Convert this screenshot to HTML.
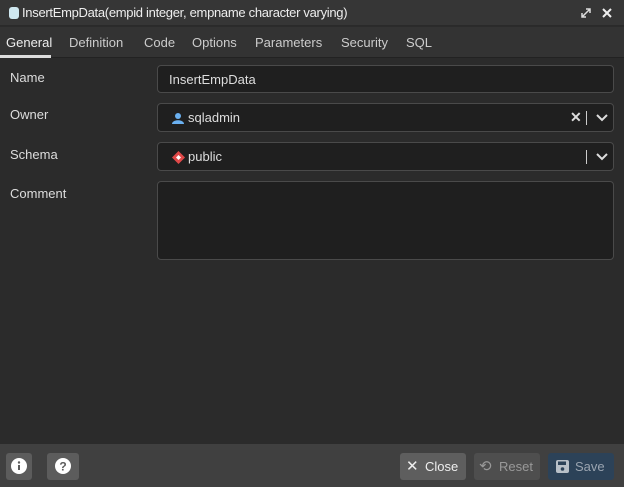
<!DOCTYPE html>
<html><head><style>
*{box-sizing:border-box;margin:0;padding:0}
body{width:624px;height:487px;background:#2b2b2b;font-family:"Liberation Sans",sans-serif;color:#e0e0e0;position:relative;overflow:hidden;font-size:13px}
.title{position:absolute;left:0;top:0;width:624px;height:26px;background:#363636;border-bottom:1px solid #2a2a2a}
.title span{position:absolute;left:22px;top:5px;font-size:13px;color:#eee;letter-spacing:-0.3px}
.tabs{position:absolute;top:27px;left:0;width:624px;height:31px;background:#333;border-bottom:1px solid #222}
.tab{position:absolute;top:8px;font-size:13px;color:#ccc}
.ul{position:absolute;left:0;top:28px;width:51px;height:3px;background:#ddd}
.lbl{position:absolute;left:10px;font-size:13px;color:#ddd}
.inp{position:absolute;left:157px;width:457px;background:#1f1f1f;border:1px solid #4a4a4a;border-radius:4px}
.inp span{position:absolute;top:6px;font-size:13px;color:#ddd}
.footer{position:absolute;left:0;top:444px;width:624px;height:43px;background:#404040}
.btn{position:absolute;top:9px;height:27px;border-radius:3px;background:#5a5a5a;color:#eee;font-size:13px}
</style></head><body>
<div class="title">
<div style="position:absolute;left:9px;top:7px;width:10px;height:12px;background:#cfe8f0;border-radius:3px"></div>
<span>InsertEmpData(empid integer, empname character varying)</span>
<svg style="position:absolute;left:580px;top:7px" width="12" height="12" viewBox="0 0 12 12"><path d="M2 10L10 2M6 2h4v4M2 6v4h4" stroke="#ddd" stroke-width="1.5" fill="none"/></svg>
<svg style="position:absolute;left:602px;top:8px" width="10" height="10" viewBox="0 0 10 10"><path d="M1 1L9 9M9 1L1 9" stroke="#eee" stroke-width="2"/></svg>
</div>
<div class="tabs">
<span class="tab" style="left:6px;color:#eee">General</span>
<span class="tab" style="left:69px">Definition</span>
<span class="tab" style="left:144px">Code</span>
<span class="tab" style="left:192px">Options</span>
<span class="tab" style="left:255px">Parameters</span>
<span class="tab" style="left:341px">Security</span>
<span class="tab" style="left:406px">SQL</span>
<div class="ul"></div>
</div>
<div class="lbl" style="top:70px">Name</div>
<div class="lbl" style="top:107px">Owner</div>
<div class="lbl" style="top:147px">Schema</div>
<div class="lbl" style="top:186px">Comment</div>
<div class="inp" style="top:65px;height:28px"><span style="left:11px">InsertEmpData</span></div>
<div class="inp" style="top:103px;height:29px">
<svg style="position:absolute;left:14px;top:8px" width="12" height="12" viewBox="0 0 12 12"><circle cx="6" cy="4" r="3" fill="#6ab0f0"/><path d="M0 12C0 7 12 7 12 12Z" fill="#6ab0f0"/></svg>
<span style="left:30px">sqladmin</span>
<span style="left:412px;font-weight:bold;font-size:14px;top:5px">✕</span>
<div style="position:absolute;left:428px;top:7px;width:1px;height:14px;background:#ccc"></div>
<svg style="position:absolute;left:438px;top:10px" width="12" height="8" viewBox="0 0 12 8"><path d="M1 1L6 6L11 1" stroke="#ddd" stroke-width="2" fill="none"/></svg>
</div>
<div class="inp" style="top:142px;height:29px">
<svg style="position:absolute;left:14px;top:8px" width="13" height="13" viewBox="0 0 13 13"><path d="M6.5 0L13 6.5L6.5 13L0 6.5Z" fill="#e04848"/><path d="M6.5 4L9 6.5L6.5 9L4 6.5Z" fill="#fff"/></svg>
<span style="left:30px">public</span>
<div style="position:absolute;left:428px;top:7px;width:1px;height:14px;background:#ccc"></div>
<svg style="position:absolute;left:438px;top:10px" width="12" height="8" viewBox="0 0 12 8"><path d="M1 1L6 6L11 1" stroke="#ddd" stroke-width="2" fill="none"/></svg>
</div>
<div class="inp" style="top:181px;height:79px"></div>
<div class="footer">
<div class="btn" style="left:6px;width:26px;background:#5c5c5c"><svg style="position:absolute;left:5px;top:5px" width="16" height="16" viewBox="0 0 16 16"><circle cx="8" cy="8" r="8" fill="#fff"/><rect x="7" y="7" width="2" height="5" fill="#5c5c5c"/><circle cx="8" cy="4.5" r="1.2" fill="#5c5c5c"/></svg></div>
<div class="btn" style="left:47px;width:32px;background:#5c5c5c"><svg style="position:absolute;left:8px;top:5px" width="16" height="16" viewBox="0 0 16 16"><circle cx="8" cy="8" r="8" fill="#fff"/><text x="8" y="12.5" text-anchor="middle" font-family="Liberation Sans" font-weight="bold" font-size="12" fill="#5c5c5c">?</text></svg></div>
<div class="btn" style="left:400px;width:66px;background:#5e5e5e"><span style="position:absolute;left:6px;top:4px;font-size:15px">✕</span><span style="position:absolute;left:25px;top:6px">Close</span></div>
<div class="btn" style="left:474px;width:66px;background:#4e4e4e;color:#999"><span style="position:absolute;left:5px;top:4px;font-size:15px">⟲</span><span style="position:absolute;left:25px;top:6px">Reset</span></div>
<div class="btn" style="left:548px;width:66px;background:#2c4258;color:#9aa4b0"><svg style="position:absolute;left:8px;top:7px" width="13" height="13" viewBox="0 0 13 13"><rect width="13" height="13" rx="2" fill="#b8c0c8"/><rect x="2" y="1.5" width="8" height="3.5" fill="#2c4258"/><circle cx="6.5" cy="9" r="1.8" fill="#2c4258"/></svg><span style="position:absolute;left:27px;top:6px">Save</span></div>
</div>
</body></html>
